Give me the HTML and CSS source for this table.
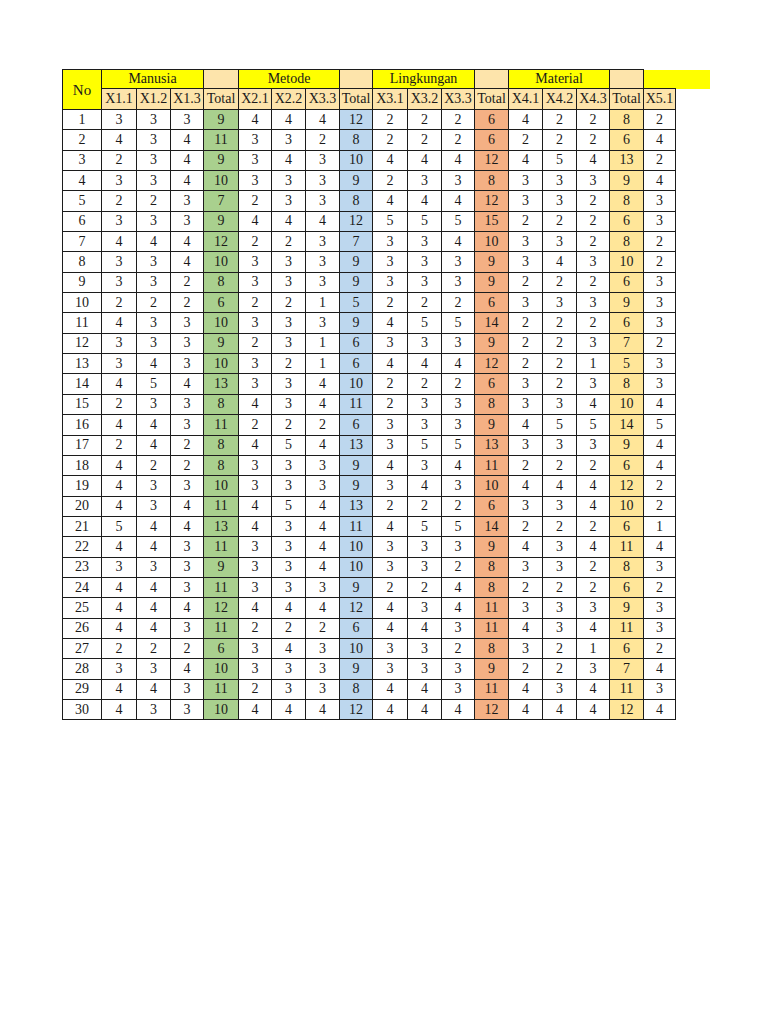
FILE: index.html
```html
<!DOCTYPE html>
<html lang="id">
<head>
<meta charset="utf-8">
<title>Data</title>
<link rel="stylesheet" href="styles.css">
</head>
<body>
<div class="page">
<table class="sheet">
<colgroup>
<col class="w39"><col class="w35"><col class="w34"><col class="w33"><col class="w35">
<col class="w33"><col class="w34"><col class="w34"><col class="w33">
<col class="w35"><col class="w34"><col class="w33"><col class="w34">
<col class="w34"><col class="w34"><col class="w33"><col class="w34">
<col class="w32"><col class="w35">
</colgroup>
<thead>
<tr class="hr1">
<th rowspan="2" class="yel no">No</th>
<th colspan="3" class="yel">Manusia</th><th class="tan"></th>
<th colspan="3" class="yel">Metode</th><th class="tan"></th>
<th colspan="3" class="yel">Lingkungan</th><th class="tan"></th>
<th colspan="3" class="yel">Material</th><th class="tan"></th>
<th class="yel open"></th><th class="yel bare"></th>
</tr>
<tr class="hr2">
<th class="tan">X1.1</th><th class="tan">X1.2</th><th class="tan">X1.3</th><th class="tan">Total</th>
<th class="tan">X2.1</th><th class="tan">X2.2</th><th class="tan">X3.3</th><th class="tan">Total</th>
<th class="tan">X3.1</th><th class="tan">X3.2</th><th class="tan">X3.3</th><th class="tan">Total</th>
<th class="tan">X4.1</th><th class="tan">X4.2</th><th class="tan">X4.3</th><th class="tan">Total</th>
<th class="tan">X5.1</th><td class="bare"></td>
</tr>
</thead>
<tbody>
<tr><td>1</td><td>3</td><td>3</td><td>3</td><td class="g">9</td><td>4</td><td>4</td><td>4</td><td class="b">12</td><td>2</td><td>2</td><td>2</td><td class="o">6</td><td>4</td><td>2</td><td>2</td><td class="y">8</td><td>2</td><td class="bare"></td></tr>
<tr><td>2</td><td>4</td><td>3</td><td>4</td><td class="g">11</td><td>3</td><td>3</td><td>2</td><td class="b">8</td><td>2</td><td>2</td><td>2</td><td class="o">6</td><td>2</td><td>2</td><td>2</td><td class="y">6</td><td>4</td><td class="bare"></td></tr>
<tr><td>3</td><td>2</td><td>3</td><td>4</td><td class="g">9</td><td>3</td><td>4</td><td>3</td><td class="b">10</td><td>4</td><td>4</td><td>4</td><td class="o">12</td><td>4</td><td>5</td><td>4</td><td class="y">13</td><td>2</td><td class="bare"></td></tr>
<tr><td>4</td><td>3</td><td>3</td><td>4</td><td class="g">10</td><td>3</td><td>3</td><td>3</td><td class="b">9</td><td>2</td><td>3</td><td>3</td><td class="o">8</td><td>3</td><td>3</td><td>3</td><td class="y">9</td><td>4</td><td class="bare"></td></tr>
<tr><td>5</td><td>2</td><td>2</td><td>3</td><td class="g">7</td><td>2</td><td>3</td><td>3</td><td class="b">8</td><td>4</td><td>4</td><td>4</td><td class="o">12</td><td>3</td><td>3</td><td>2</td><td class="y">8</td><td>3</td><td class="bare"></td></tr>
<tr><td>6</td><td>3</td><td>3</td><td>3</td><td class="g">9</td><td>4</td><td>4</td><td>4</td><td class="b">12</td><td>5</td><td>5</td><td>5</td><td class="o">15</td><td>2</td><td>2</td><td>2</td><td class="y">6</td><td>3</td><td class="bare"></td></tr>
<tr><td>7</td><td>4</td><td>4</td><td>4</td><td class="g">12</td><td>2</td><td>2</td><td>3</td><td class="b">7</td><td>3</td><td>3</td><td>4</td><td class="o">10</td><td>3</td><td>3</td><td>2</td><td class="y">8</td><td>2</td><td class="bare"></td></tr>
<tr><td>8</td><td>3</td><td>3</td><td>4</td><td class="g">10</td><td>3</td><td>3</td><td>3</td><td class="b">9</td><td>3</td><td>3</td><td>3</td><td class="o">9</td><td>3</td><td>4</td><td>3</td><td class="y">10</td><td>2</td><td class="bare"></td></tr>
<tr><td>9</td><td>3</td><td>3</td><td>2</td><td class="g">8</td><td>3</td><td>3</td><td>3</td><td class="b">9</td><td>3</td><td>3</td><td>3</td><td class="o">9</td><td>2</td><td>2</td><td>2</td><td class="y">6</td><td>3</td><td class="bare"></td></tr>
<tr><td>10</td><td>2</td><td>2</td><td>2</td><td class="g">6</td><td>2</td><td>2</td><td>1</td><td class="b">5</td><td>2</td><td>2</td><td>2</td><td class="o">6</td><td>3</td><td>3</td><td>3</td><td class="y">9</td><td>3</td><td class="bare"></td></tr>
<tr><td>11</td><td>4</td><td>3</td><td>3</td><td class="g">10</td><td>3</td><td>3</td><td>3</td><td class="b">9</td><td>4</td><td>5</td><td>5</td><td class="o">14</td><td>2</td><td>2</td><td>2</td><td class="y">6</td><td>3</td><td class="bare"></td></tr>
<tr><td>12</td><td>3</td><td>3</td><td>3</td><td class="g">9</td><td>2</td><td>3</td><td>1</td><td class="b">6</td><td>3</td><td>3</td><td>3</td><td class="o">9</td><td>2</td><td>2</td><td>3</td><td class="y">7</td><td>2</td><td class="bare"></td></tr>
<tr><td>13</td><td>3</td><td>4</td><td>3</td><td class="g">10</td><td>3</td><td>2</td><td>1</td><td class="b">6</td><td>4</td><td>4</td><td>4</td><td class="o">12</td><td>2</td><td>2</td><td>1</td><td class="y">5</td><td>3</td><td class="bare"></td></tr>
<tr><td>14</td><td>4</td><td>5</td><td>4</td><td class="g">13</td><td>3</td><td>3</td><td>4</td><td class="b">10</td><td>2</td><td>2</td><td>2</td><td class="o">6</td><td>3</td><td>2</td><td>3</td><td class="y">8</td><td>3</td><td class="bare"></td></tr>
<tr><td>15</td><td>2</td><td>3</td><td>3</td><td class="g">8</td><td>4</td><td>3</td><td>4</td><td class="b">11</td><td>2</td><td>3</td><td>3</td><td class="o">8</td><td>3</td><td>3</td><td>4</td><td class="y">10</td><td>4</td><td class="bare"></td></tr>
<tr><td>16</td><td>4</td><td>4</td><td>3</td><td class="g">11</td><td>2</td><td>2</td><td>2</td><td class="b">6</td><td>3</td><td>3</td><td>3</td><td class="o">9</td><td>4</td><td>5</td><td>5</td><td class="y">14</td><td>5</td><td class="bare"></td></tr>
<tr><td>17</td><td>2</td><td>4</td><td>2</td><td class="g">8</td><td>4</td><td>5</td><td>4</td><td class="b">13</td><td>3</td><td>5</td><td>5</td><td class="o">13</td><td>3</td><td>3</td><td>3</td><td class="y">9</td><td>4</td><td class="bare"></td></tr>
<tr><td>18</td><td>4</td><td>2</td><td>2</td><td class="g">8</td><td>3</td><td>3</td><td>3</td><td class="b">9</td><td>4</td><td>3</td><td>4</td><td class="o">11</td><td>2</td><td>2</td><td>2</td><td class="y">6</td><td>4</td><td class="bare"></td></tr>
<tr><td>19</td><td>4</td><td>3</td><td>3</td><td class="g">10</td><td>3</td><td>3</td><td>3</td><td class="b">9</td><td>3</td><td>4</td><td>3</td><td class="o">10</td><td>4</td><td>4</td><td>4</td><td class="y">12</td><td>2</td><td class="bare"></td></tr>
<tr><td>20</td><td>4</td><td>3</td><td>4</td><td class="g">11</td><td>4</td><td>5</td><td>4</td><td class="b">13</td><td>2</td><td>2</td><td>2</td><td class="o">6</td><td>3</td><td>3</td><td>4</td><td class="y">10</td><td>2</td><td class="bare"></td></tr>
<tr><td>21</td><td>5</td><td>4</td><td>4</td><td class="g">13</td><td>4</td><td>3</td><td>4</td><td class="b">11</td><td>4</td><td>5</td><td>5</td><td class="o">14</td><td>2</td><td>2</td><td>2</td><td class="y">6</td><td>1</td><td class="bare"></td></tr>
<tr><td>22</td><td>4</td><td>4</td><td>3</td><td class="g">11</td><td>3</td><td>3</td><td>4</td><td class="b">10</td><td>3</td><td>3</td><td>3</td><td class="o">9</td><td>4</td><td>3</td><td>4</td><td class="y">11</td><td>4</td><td class="bare"></td></tr>
<tr><td>23</td><td>3</td><td>3</td><td>3</td><td class="g">9</td><td>3</td><td>3</td><td>4</td><td class="b">10</td><td>3</td><td>3</td><td>2</td><td class="o">8</td><td>3</td><td>3</td><td>2</td><td class="y">8</td><td>3</td><td class="bare"></td></tr>
<tr><td>24</td><td>4</td><td>4</td><td>3</td><td class="g">11</td><td>3</td><td>3</td><td>3</td><td class="b">9</td><td>2</td><td>2</td><td>4</td><td class="o">8</td><td>2</td><td>2</td><td>2</td><td class="y">6</td><td>2</td><td class="bare"></td></tr>
<tr><td>25</td><td>4</td><td>4</td><td>4</td><td class="g">12</td><td>4</td><td>4</td><td>4</td><td class="b">12</td><td>4</td><td>3</td><td>4</td><td class="o">11</td><td>3</td><td>3</td><td>3</td><td class="y">9</td><td>3</td><td class="bare"></td></tr>
<tr><td>26</td><td>4</td><td>4</td><td>3</td><td class="g">11</td><td>2</td><td>2</td><td>2</td><td class="b">6</td><td>4</td><td>4</td><td>3</td><td class="o">11</td><td>4</td><td>3</td><td>4</td><td class="y">11</td><td>3</td><td class="bare"></td></tr>
<tr><td>27</td><td>2</td><td>2</td><td>2</td><td class="g">6</td><td>3</td><td>4</td><td>3</td><td class="b">10</td><td>3</td><td>3</td><td>2</td><td class="o">8</td><td>3</td><td>2</td><td>1</td><td class="y">6</td><td>2</td><td class="bare"></td></tr>
<tr><td>28</td><td>3</td><td>3</td><td>4</td><td class="g">10</td><td>3</td><td>3</td><td>3</td><td class="b">9</td><td>3</td><td>3</td><td>3</td><td class="o">9</td><td>2</td><td>2</td><td>3</td><td class="y">7</td><td>4</td><td class="bare"></td></tr>
<tr><td>29</td><td>4</td><td>4</td><td>3</td><td class="g">11</td><td>2</td><td>3</td><td>3</td><td class="b">8</td><td>4</td><td>4</td><td>3</td><td class="o">11</td><td>4</td><td>3</td><td>4</td><td class="y">11</td><td>3</td><td class="bare"></td></tr>
<tr><td>30</td><td>4</td><td>3</td><td>3</td><td class="g">10</td><td>4</td><td>4</td><td>4</td><td class="b">12</td><td>4</td><td>4</td><td>4</td><td class="o">12</td><td>4</td><td>4</td><td>4</td><td class="y">12</td><td>4</td><td class="bare"></td></tr>
</tbody>
</table>
</div>
</body>
</html>
```
FILE: styles.css
```css
html, body {
  margin: 0;
  padding: 0;
  background: #ffffff;
}

.page {
  padding: 69px 0 0 62px;
}

.sheet {
  border-collapse: collapse;
  table-layout: fixed;
  width: 648px;
  font-family: "Liberation Serif", "Times New Roman", serif;
  font-size: 14px;
  color: #1a1a1a;
}

.w39 { width: 39px; }
.w35 { width: 35px; }
.w34 { width: 34px; }
.w33 { width: 33px; }
.w32 { width: 32px; }

.sheet th,
.sheet td {
  border: 1px solid #1c1c1c;
  padding: 0;
  text-align: center;
  vertical-align: middle;
  font-weight: normal;
  line-height: 16px;
  overflow: hidden;
  white-space: nowrap;
}

.hr1 { height: 19px; }
.hr2 { height: 21px; }
.sheet tbody tr { height: 20.35px; }

.sheet .no {
  font-size: 15px;
}

.yel { background: #ffff00; }
.tan { background: #fde4ab; }

.sheet th.open {
  border-top: none;
  border-right: none;
}

.sheet th.bare,
.sheet td.bare {
  border: none;
}

.sheet th.yel.bare {
  background: #ffff00;
}

.g { background: #a9d08e; }
.b { background: #bdd7ee; }
.o { background: #f4b084; }
.y { background: #ffe699; }
```
